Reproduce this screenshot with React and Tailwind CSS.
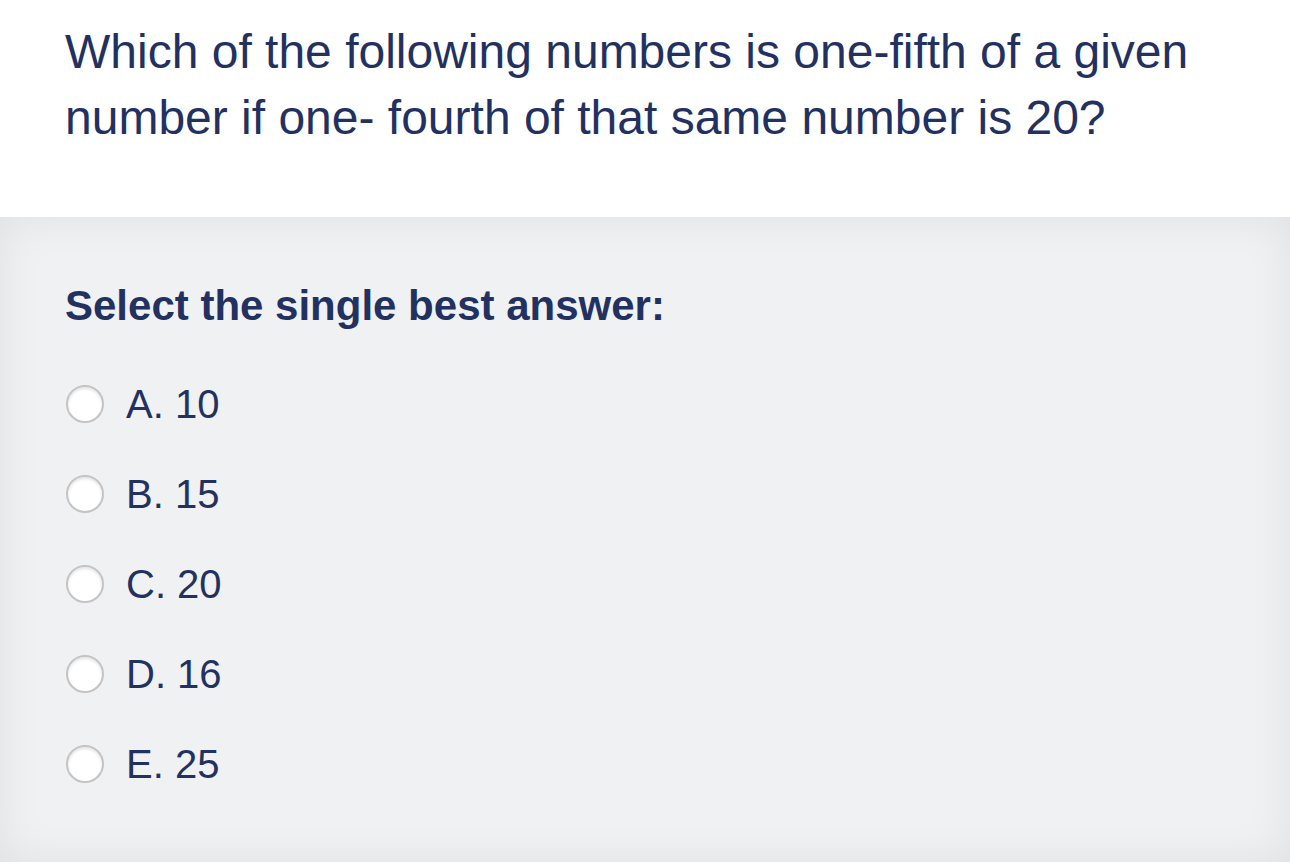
import React from 'react';

const options = [
  { id: 'A', label: 'A. 10' },
  { id: 'B', label: 'B. 15' },
  { id: 'C', label: 'C. 20' },
  { id: 'D', label: 'D. 16' },
  { id: 'E', label: 'E. 25' },
];

function Radio() {
  return (
    <span className="block w-[38px] h-[38px] shrink-0 rounded-full border-2 border-[#c4c4c4] bg-white shadow-[inset_0_2px_3px_rgba(0,0,0,0.1)]" />
  );
}

export default function App() {
  return (
    <div className="min-h-[862px] w-full bg-white text-[#22315f] font-['Liberation_Sans',Arial,sans-serif] flex flex-col">
      <div className="px-[65px] pt-[19px] pb-[66px]">
        <p className="text-[48px] leading-[66px]">
          Which of the following numbers is one-fifth of a given number if one- fourth of that same number is 20?
        </p>
      </div>

      <div className="flex-1 bg-[#f0f1f3] shadow-[inset_0_0_45px_rgba(0,0,0,0.07)] px-[65px] pt-[65px] pb-[40px]">
        <h2 className="text-[42px] leading-[48px] font-bold">Select the single best answer:</h2>
        <div className="mt-[29px] flex flex-col">
          {options.map((opt) => (
            <label key={opt.id} className="flex items-center gap-[22px] h-[90px] cursor-pointer">
              <span className="pl-px">
                <Radio />
              </span>
              <span className="text-[40px] leading-[90px]">{opt.label}</span>
            </label>
          ))}
        </div>
      </div>
    </div>
  );
}
